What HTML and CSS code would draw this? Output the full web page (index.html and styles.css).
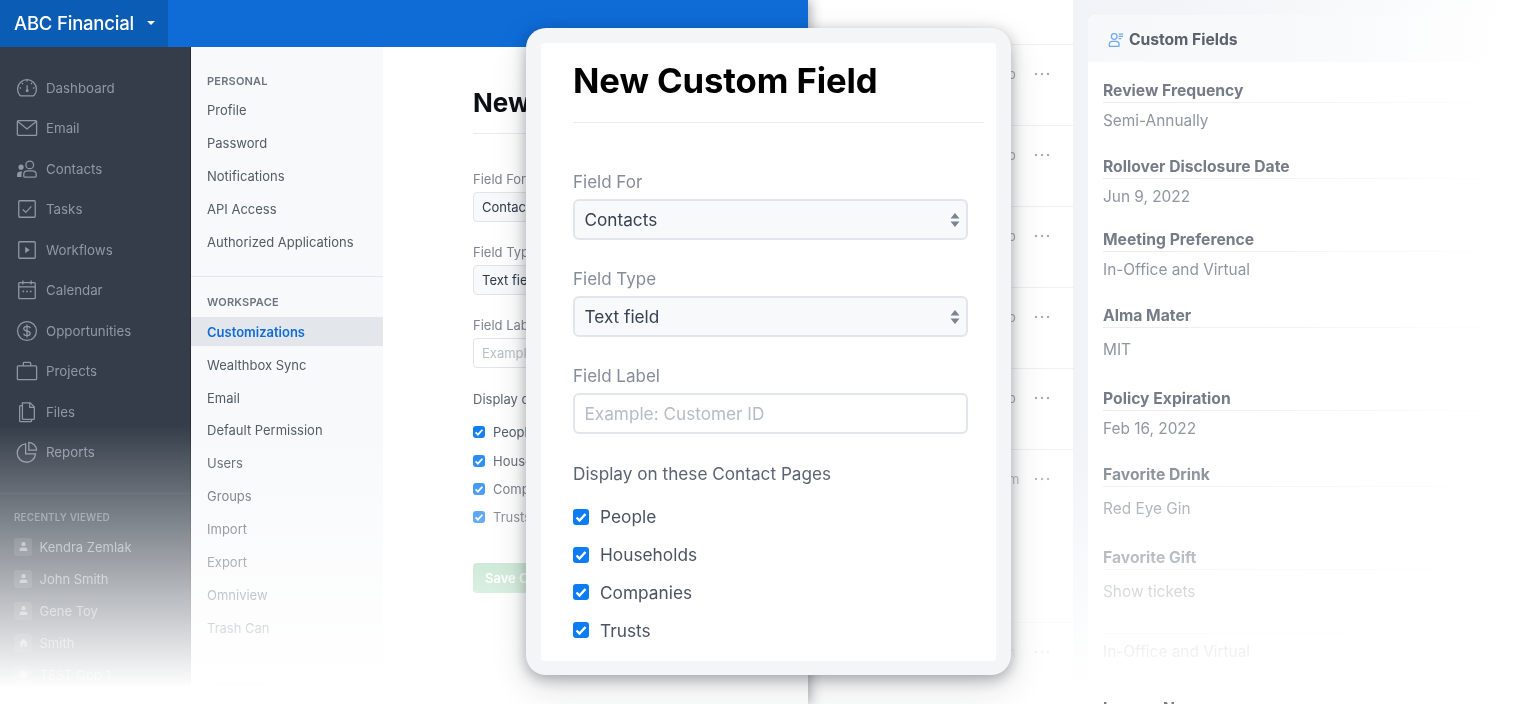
FILE: index.html
```html
<!DOCTYPE html>
<html lang="en">
<head>
<meta charset="utf-8">
<title>New Custom Field</title>
<link rel="stylesheet" href="styles.css">
</head>
<body>
<div class="stage">
  <div class="windows">
    <section class="left-window">
      <header class="topbar">
        <div class="brand"><span>ABC Financial</span><i class="caret"></i></div>
      </header>
      <div class="left-body">
        <aside class="sidebar">
          <nav class="side-nav">
            <a class="side-item"><svg class="side-icon" viewBox="0 0 24 24"><path d="M5.500 20.500h13a2 2 0 0 0 1.500-.8 10.300 10.300 0 1 0-16 0 2 2 0 0 0 1.500.8z"/><path d="M12 2.500v2.500M4 12h1.500M18.500 12H20M6.500 6.500l1.200 1.200M17.500 6.500l-1.200 1.200M12 9l.3 5"/><circle class="fill" cx="12.200" cy="15" r="1.600"/></svg><span>Dashboard</span></a>
            <a class="side-item"><svg class="side-icon" viewBox="0 0 24 24"><rect x="1.500" y="4" width="21" height="16" rx="1"/><path d="M2 5l10 8 10-8"/></svg><span>Email</span></a>
            <a class="side-item"><svg class="side-icon" viewBox="0 0 24 24"><circle cx="15" cy="7.500" r="4.200"/><path d="M8.500 20v-2.500c0-2 1.500-3.500 4-3.500h5c2.500 0 4.500 1.500 4.500 3.500V20a.8.8 0 0 1-.8.8H9.300a.8.8 0 0 1-.8-.8z"/><circle class="fill" cx="5.500" cy="10" r="2.800"/><path class="fill" d="M1.200 20.800v-2.800c0-2 1.500-3.200 3.800-3.200h1.800a6 6 0 0 0-.8 3v3z"/></svg><span>Contacts</span></a>
            <a class="side-item"><svg class="side-icon" viewBox="0 0 24 24"><rect x="3" y="3" width="18" height="18" rx="1"/><path d="M7.500 12.500l3.200 3.200 6-6.500"/></svg><span>Tasks</span></a>
            <a class="side-item"><svg class="side-icon" viewBox="0 0 24 24"><rect x="3" y="3" width="18" height="18" rx="1"/><path class="fill" d="M10 8.500l5 3.500-5 3.500z"/></svg><span>Workflows</span></a>
            <a class="side-item"><svg class="side-icon" viewBox="0 0 24 24"><rect x="3" y="4" width="18" height="17.500" rx="1"/><path d="M3 8.500h18M7.500 1.500V6M16.500 1.500V6"/><circle class="fill" cx="8" cy="13.500" r="1"/><circle class="fill" cx="12" cy="13.500" r="1"/><circle class="fill" cx="16" cy="13.500" r="1"/></svg><span>Calendar</span></a>
            <a class="side-item"><svg class="side-icon" viewBox="0 0 24 24"><circle cx="12" cy="12" r="10.300"/><path d="M15.500 9c-.3-1.300-1.700-2-3.500-2-2 0-3.500 1-3.500 2.500 0 3.500 7 1.500 7 5 0 1.500-1.500 2.500-3.500 2.500-1.900 0-3.300-.8-3.600-2.200M12 5v14"/></svg><span>Opportunities</span></a>
            <a class="side-item"><svg class="side-icon" viewBox="0 0 24 24"><rect x="1.500" y="6.500" width="21" height="15" rx="1"/><path d="M8 6.500V3.500a1 1 0 0 1 1-1h6a1 1 0 0 1 1 1v3"/></svg><span>Projects</span></a>
            <a class="side-item"><svg class="side-icon" viewBox="0 0 24 24"><path d="M7 2h8.500L20 6.500V19a1 1 0 0 1-1 1H8a1 1 0 0 1-1-1z"/><path d="M15 2v5h5"/><path d="M7 5H5a1 1 0 0 0-1 1v15.500a1 1 0 0 0 1 1h11a1 1 0 0 0 1-1V20"/></svg><span>Files</span></a>
            <a class="side-item"><svg class="side-icon" viewBox="0 0 24 24"><path d="M10.500 3.200a10 10 0 1 0 10.800 10.800H10.500z"/><path d="M14 1.500a9 9 0 0 1 8.500 8.500H14z"/></svg><span>Reports</span></a>
          </nav>
          <div class="recent">
            <h4 class="recent-title">RECENTLY VIEWED</h4>
            <a class="recent-item"><span class="avatar"><svg viewBox="0 0 12 12"><circle cx="6" cy="3.500" r="2.300"/><path d="M1.800 11V9.300C1.800 7.800 3 7 4.500 7h3c1.500 0 2.700.8 2.700 2.300V11z"/></svg></span><span>Kendra Zemlak</span></a>
            <a class="recent-item"><span class="avatar"><svg viewBox="0 0 12 12"><circle cx="6" cy="3.500" r="2.300"/><path d="M1.800 11V9.300C1.800 7.800 3 7 4.500 7h3c1.500 0 2.700.8 2.700 2.300V11z"/></svg></span><span>John Smith</span></a>
            <a class="recent-item"><span class="avatar"><svg viewBox="0 0 12 12"><circle cx="6" cy="3.500" r="2.300"/><path d="M1.800 11V9.300C1.800 7.800 3 7 4.500 7h3c1.500 0 2.700.8 2.700 2.300V11z"/></svg></span><span>Gene Toy</span></a>
            <a class="recent-item"><span class="avatar"><svg viewBox="0 0 12 12"><path d="M6 1.500L1 6.500h1.500V11h2.500V8h2v3h2.500V6.500H11z"/></svg></span><span>Smith</span></a>
            <a class="recent-item"><span class="avatar"><svg viewBox="0 0 12 12"><circle cx="6" cy="6" r="4.500"/></svg></span><span>TEST Opp 1</span></a>
          </div>
        </aside>
        <nav class="settings">
          <h4 class="settings-title">PERSONAL</h4>
          <a class="settings-item">Profile</a>
          <a class="settings-item">Password</a>
          <a class="settings-item">Notifications</a>
          <a class="settings-item">API Access</a>
          <a class="settings-item">Authorized Applications</a>
          <hr class="settings-rule">
          <h4 class="settings-title">WORKSPACE</h4>
          <a class="settings-item active">Customizations</a>
          <a class="settings-item">Wealthbox Sync</a>
          <a class="settings-item">Email</a>
          <a class="settings-item">Default Permission</a>
          <a class="settings-item">Users</a>
          <a class="settings-item">Groups</a>
          <a class="settings-item">Import</a>
          <a class="settings-item">Export</a>
          <a class="settings-item">Omniview</a>
          <a class="settings-item">Trash Can</a>
          <h4 class="settings-title account">ACCOUNT</h4>
        </nav>
        <main class="back-form">
          <h2 class="back-title">New Custom Field</h2>
          <div class="back-field"><label class="back-label">Field For</label><div class="back-input shaded">Contacts</div></div>
          <div class="back-field"><label class="back-label">Field Type</label><div class="back-input shaded">Text field</div></div>
          <div class="back-field"><label class="back-label">Field Label</label><div class="back-input hint">Example: Customer ID</div></div>
          <p class="back-display">Display on these Contact Pages</p>
          <div class="back-check"><i class="box small"><svg viewBox="0 0 16 16"><path d="M3.500 8.500l3 3 6-6.500"/></svg></i>People</div>
          <div class="back-check"><i class="box small"><svg viewBox="0 0 16 16"><path d="M3.500 8.500l3 3 6-6.500"/></svg></i>Households</div>
          <div class="back-check"><i class="box small"><svg viewBox="0 0 16 16"><path d="M3.500 8.500l3 3 6-6.500"/></svg></i>Companies</div>
          <div class="back-check"><i class="box small"><svg viewBox="0 0 16 16"><path d="M3.500 8.500l3 3 6-6.500"/></svg></i>Trusts</div>
          <button class="back-save">Save Custom Field</button>
        </main>
      </div>
    </section>

    <section class="right-window">
      <div class="list">
        <div class="row row-first"></div>
        <div class="row"><span class="row-text">o</span><i class="dots"></i></div>
        <div class="row"><span class="row-text">o</span><i class="dots"></i></div>
        <div class="row"><span class="row-text">o</span><i class="dots"></i></div>
        <div class="row"><span class="row-text">o</span><i class="dots"></i></div>
        <div class="row"><span class="row-text">o</span><i class="dots"></i></div>
        <div class="row row-tall"><span class="row-text">m</span><i class="dots"></i></div>
        <div class="row"><span class="row-text">n</span><i class="dots"></i></div>
      </div>
      <aside class="panel">
        <div class="card">
          <div class="card-head">
            <svg class="card-icon" viewBox="0 0 18 18"><circle cx="7" cy="5" r="3.200"/><path d="M1.500 15.500v-1.500c0-2 1.500-3.500 3.500-3.500h4c2 0 3.500 1.500 3.500 3.500v1.500a.7.7 0 0 1-.7.7H2.200a.7.7 0 0 1-.7-.7z"/><path d="M12 2.500h5M12 5h5M12 7.500h3"/></svg>
            <h3 class="card-title">Custom Fields</h3>
          </div>
          <div class="card-body">
            <div class="cf"><div class="cf-label">Review Frequency</div><div class="cf-value">Semi-Annually</div></div>
            <div class="cf gap-m"><div class="cf-label">Rollover Disclosure Date</div><div class="cf-value">Jun 9, 2022</div></div>
            <div class="cf gap-s"><div class="cf-label">Meeting Preference</div><div class="cf-value">In-Office and Virtual</div></div>
            <div class="cf gap-m"><div class="cf-label">Alma Mater</div><div class="cf-value far">MIT</div></div>
            <div class="cf gap-l"><div class="cf-label">Policy Expiration</div><div class="cf-value">Feb 16, 2022</div></div>
            <div class="cf gap-m"><div class="cf-label">Favorite Drink</div><div class="cf-value far">Red Eye Gin</div></div>
            <div class="cf gap-l"><div class="cf-label">Favorite Gift</div><div class="cf-value far">Show tickets</div></div>
            <div class="cf gap-blank"><div class="cf-label blank"></div><div class="cf-value">In-Office and Virtual</div></div>
          </div>
        </div>
      </aside>
    </section>
  </div>

  <div class="tail">Lawyer Name</div>

  <div class="modal">
    <div class="modal-inner">
      <h1 class="modal-title">New Custom Field</h1>
      <div class="m-field">
        <label class="m-label">Field For</label>
        <div class="m-select"><span>Contacts</span><svg class="updown" viewBox="0 0 10 14"><path d="M5 0l4.500 5.500h-9zM5 14L.5 8.500h9z"/></svg></div>
      </div>
      <div class="m-field">
        <label class="m-label">Field Type</label>
        <div class="m-select"><span>Text field</span><svg class="updown" viewBox="0 0 10 14"><path d="M5 0l4.500 5.500h-9zM5 14L.5 8.500h9z"/></svg></div>
      </div>
      <div class="m-field">
        <label class="m-label">Field Label</label>
        <div class="m-select m-text"><span>Example: Customer ID</span></div>
      </div>
      <p class="m-display">Display on these Contact Pages</p>
      <div class="m-checks">
        <div class="m-check"><i class="box"><svg viewBox="0 0 16 16"><path d="M3.500 8.500l3 3 6-6.500"/></svg></i>People</div>
        <div class="m-check"><i class="box"><svg viewBox="0 0 16 16"><path d="M3.500 8.500l3 3 6-6.500"/></svg></i>Households</div>
        <div class="m-check"><i class="box"><svg viewBox="0 0 16 16"><path d="M3.500 8.500l3 3 6-6.500"/></svg></i>Companies</div>
        <div class="m-check"><i class="box"><svg viewBox="0 0 16 16"><path d="M3.500 8.500l3 3 6-6.500"/></svg></i>Trusts</div>
      </div>
    </div>
  </div>
</div>
</body>
</html>
```
FILE: styles.css
```css
* { box-sizing: border-box; }
html, body { margin: 0; padding: 0; background: #fff; }
body { font-family: Inter, "Liberation Sans", sans-serif; }
h1, h2, h3, h4, p { margin: 0; }
.stage { position: relative; width: 1536px; height: 704px; overflow: hidden; background: #fff; filter: blur(.35px); }
.windows { display: flex; height: 704px; }

/* left window */
.left-window { position: relative; z-index: 2; flex: 0 0 808px; display: flex; flex-direction: column; background: #fff; box-shadow: 2px 0 12px rgba(20, 25, 35, .38); }
.left-window::after, .right-window::after { content: ""; position: absolute; left: 0; right: 0; top: 0; height: 704px; background: linear-gradient(to bottom, rgba(255,255,255,0) 425px, #fff 688px); pointer-events: none; }
.topbar { flex: 0 0 47px; background: #0f6cd7; }
.brand { width: 168px; height: 47px; background: #0b5cb5; color: #fff; display: flex; align-items: center; padding: 0 0 1px 14px; font-size: 18.500px; font-weight: 500; letter-spacing: -.2px; }
.caret { width: 0; height: 0; margin-left: 13px; border-left: 4.500px solid transparent; border-right: 4.500px solid transparent; border-top: 4.500px solid #fff; }
.left-body { flex: 1; display: flex; min-height: 0; }

.sidebar { flex: 0 0 191px; background: #343d49; border-right: 1px solid #262c36; padding-top: 20.500px; }
.side-nav { height: 425px; }
.side-item { display: flex; align-items: center; height: 40.500px; padding-left: 16px; color: #9098a3; font-size: 13.300px; }
.side-icon { width: 22px; height: 22px; margin-right: 8px; fill: none; stroke: #8f98a4; stroke-width: 1.400; }
.side-icon .fill { fill: #8f98a4; stroke: none; }
.recent { border-top: 1px solid #3e4652; padding-top: 16px; }
.recent-title { height: 14px; margin-bottom: 7px; padding-left: 14px; font-size: 10px; line-height: 14px; font-weight: 600; color: #7b838f; letter-spacing: .1px; }
.recent-item { display: flex; align-items: center; height: 32px; padding-left: 14px; color: #9aa2ad; font-size: 13px; }
.avatar { display: flex; align-items: center; justify-content: center; width: 18px; height: 18px; margin-right: 7.500px; border-radius: 3px; background: #4a525e; }
.avatar svg { width: 11px; height: 11px; fill: #9aa2ad; }

.settings { flex: 0 0 192px; background: #f8f9fb; padding-top: 27px; overflow: hidden; }
.settings-title { height: 14px; margin-bottom: 5.500px; padding-left: 16px; font-size: 11px; line-height: 14px; font-weight: 600; color: #6c7480; letter-spacing: .2px; }
.settings-title.account { margin-top: 36px; }
.settings-rule { height: 1px; margin: 18px 0 18.500px; border: 0; background: #e3e6ea; }
.settings-item { display: flex; align-items: center; height: 32.900px; padding-left: 16px; font-size: 13px; color: #515a66; }
.settings-item.active { height: 29px; margin: 7.800px 0 2px; background: #e3e7ec; color: #0f6cd7; font-weight: 600; }

.back-form { flex: 1; padding: 40px 0 0 90px; overflow: hidden; }
.back-title { width: 300px; height: 47px; padding-bottom: 14px; margin-bottom: 37px; border-bottom: 1px solid #e9ecef; font-size: 26px; line-height: 32px; font-weight: 700; color: #0c0f14; white-space: nowrap; }
.back-field { width: 300px; height: 73px; }
.back-label { display: block; height: 16px; margin-bottom: 5px; font-size: 13px; line-height: 17px; color: #7d8591; white-space: nowrap; }
.back-input { height: 30px; padding-left: 8px; border: 1px solid #e1e5ea; border-radius: 4px; font-size: 13px; line-height: 28px; color: #2f3947; }
.back-input.shaded { background: #f7f9fb; }
.back-input.hint { color: #b9c0c9; }
.back-display { height: 16px; margin: 1px 0 11px; font-size: 13px; line-height: 16px; color: #5d6673; white-space: nowrap; }
.back-check { display: flex; align-items: center; height: 28.400px; font-size: 13px; color: #4f5866; }
.box { flex: none; display: flex; width: 16px; height: 16px; margin-right: 11px; border-radius: 3px; background: #0d7cf2; }
.box svg { width: 100%; height: 100%; fill: none; stroke: #fff; stroke-width: 2.400; }
.box.small { width: 12px; height: 12px; margin-right: 8px; }
.back-save { display: block; width: 150px; height: 30px; margin-top: 31.500px; padding: 0 12px; border: 0; border-radius: 4px; background: #99d3ae; color: #fff; font: 600 13px Inter, "Liberation Sans", sans-serif; text-align: left; white-space: nowrap; }

/* right window */
.right-window { position: relative; z-index: 1; flex: 1; display: flex; }
.list { flex: 0 0 265px; background: #fff; }
.row { display: flex; align-items: flex-start; height: 81px; padding: 20px 0 0 200px; border-bottom: 1px solid #edf0f3; }
.row-first { height: 45px; padding: 0; }
.row-tall { height: 173px; }
.row-text { width: 26px; font-size: 13px; line-height: 18px; color: #a3a9b2; }
.dots { display: block; width: 16px; height: 4px; margin-top: 7px; background: radial-gradient(circle at 2px 2px, #a7adb6 1.300px, transparent 1.600px) 0 0 / 6px 4px repeat-x; }
.panel { flex: 1; padding: 15px 0 0 15px; height: 690px; background: linear-gradient(to right, #f0f3f7, #f5f7f9 45%, #fff 95%); }
.card { height: 100%; background: #fff; border-radius: 8px 0 0 0; overflow: hidden; }
.card-head { display: flex; align-items: center; height: 47px; padding: 2px 0 0 20px; background: linear-gradient(to right, #f6f8fa, #f8f9fb 45%, #fff 95%); }
.card-icon { width: 16px; height: 16px; margin-right: 5px; fill: none; stroke: #6ea9ee; stroke-width: 1.400; }
.card-title { font-size: 15.700px; font-weight: 700; color: #5b626c; letter-spacing: -.05px; }
.card-body { padding: 19px 0 0 15px; }
.cf-label { width: 407px; height: 22px; padding-bottom: 1px; font-size: 15.700px; line-height: 20px; font-weight: 700; color: #757c87; white-space: nowrap; border-bottom: 1px solid; border-image: linear-gradient(to right, #e8ebef, #f2f4f6 50%, rgba(255,255,255,0)) 1; }
.cf-value { margin-top: 7px; font-size: 15.400px; line-height: 22px; color: #8f96a1; white-space: nowrap; }
.cf-value.far { margin-top: 11px; }
.gap-s { margin-top: 22px; }
.gap-m { margin-top: 25px; }
.gap-l { margin-top: 28px; }
.gap-blank { margin-top: 9px; }
.tail { position: absolute; z-index: 3; left: 1103px; top: 699px; font-size: 15.700px; line-height: 20px; font-weight: 700; color: #777e89; }

/* modal */
.modal { position: absolute; z-index: 5; left: 526px; top: 28px; width: 485px; height: 647px; padding: 15px 15px 14px; border-radius: 20px; background: #f3f5f7; box-shadow: 0 4px 14px rgba(20, 25, 35, .32), 0 12px 36px rgba(20, 25, 35, .14); }
.modal-inner { height: 100%; padding: 16px 12px 0 32px; border-radius: 3px; background: #fff; }
.modal-title { height: 64px; padding-bottom: 21px; margin-bottom: 48px; border-bottom: 1px solid #e8ecf0; font-size: 34.700px; line-height: 42px; font-weight: 700; color: #000; letter-spacing: -.1px; white-space: nowrap; }
.m-field { height: 97px; }
.m-label { display: block; height: 22px; margin-bottom: 6px; font-size: 17px; line-height: 23px; color: #858d9a; }
.m-select { display: flex; align-items: center; justify-content: space-between; width: 395px; height: 41px; padding: 0 6px 0 9.500px; border: 2px solid #e2e6eb; border-radius: 6px; background: #f7f9fb; font-size: 17.200px; color: #374151; }
.m-text { background: #fff; color: #b5bcc6; }
.updown { width: 10px; height: 14px; fill: #7b8493; }
.m-display { height: 24px; margin-bottom: 12px; font-size: 17.200px; line-height: 24px; color: #5b6472; }
.m-check { display: flex; align-items: center; height: 37.800px; font-size: 17.300px; color: #4a5362; }
```
